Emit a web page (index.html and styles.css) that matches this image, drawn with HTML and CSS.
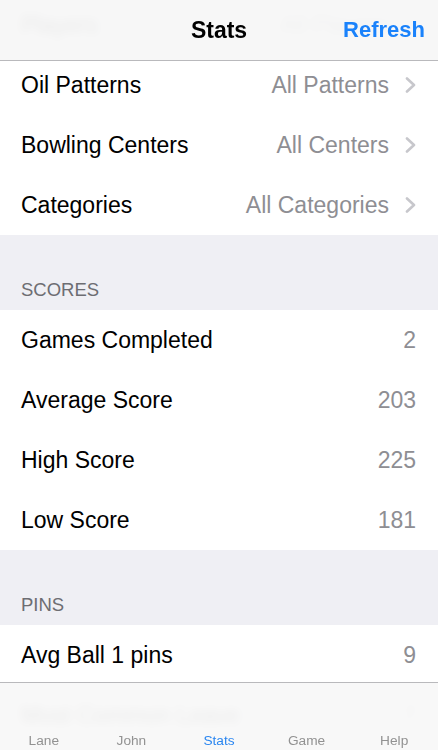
FILE: index.html
```html
<!DOCTYPE html>
<html>
<head>
<meta charset="utf-8">
<link rel="stylesheet" href="styles.css">
</head>
<body>
<div class="screen">
  <div class="content">
    <div class="group">
      <div class="row"><span class="label">Players</span><span class="value">All Players</span><svg class="chev" viewBox="0 0 12 16"><path d="M2 1.5 L9 8 L2 14.5"/></svg></div>
      <div class="row"><span class="label">Oil Patterns</span><span class="value">All Patterns</span><svg class="chev" viewBox="0 0 12 16"><path d="M2 1.5 L9 8 L2 14.5"/></svg></div>
      <div class="row"><span class="label">Bowling Centers</span><span class="value">All Centers</span><svg class="chev" viewBox="0 0 12 16"><path d="M2 1.5 L9 8 L2 14.5"/></svg></div>
      <div class="row"><span class="label">Categories</span><span class="value">All Categories</span><svg class="chev" viewBox="0 0 12 16"><path d="M2 1.5 L9 8 L2 14.5"/></svg></div>
    </div>
    <div class="section-header">SCORES</div>
    <div class="group">
      <div class="row"><span class="label">Games Completed</span><span class="value num">2</span></div>
      <div class="row"><span class="label">Average Score</span><span class="value num">203</span></div>
      <div class="row"><span class="label">High Score</span><span class="value num">225</span></div>
      <div class="row"><span class="label">Low Score</span><span class="value num">181</span></div>
    </div>
    <div class="section-header">PINS</div>
    <div class="group">
      <div class="row"><span class="label">Avg Ball 1 pins</span><span class="value num">9</span></div>
      <div class="row"><span class="label">Most Common Leave</span><span class="value num">7</span></div>
    </div>
  </div>
  <div class="navbar">
    <div class="nav-side"></div>
    <div class="nav-title">Stats</div>
    <div class="nav-side nav-right">Refresh</div>
  </div>
  <div class="tabbar">
    <div class="tab">Lane</div>
    <div class="tab">John</div>
    <div class="tab active">Stats</div>
    <div class="tab">Game</div>
    <div class="tab">Help</div>
  </div>
</div>
</body>
</html>
```
FILE: styles.css
```css
* { box-sizing: border-box; }
html, body { margin: 0; padding: 0; }
body {
  font-family: "Liberation Sans", Arial, sans-serif;
  background: #efeff4;
}
.screen {
  position: relative;
  width: 438px;
  height: 750px;
  overflow: hidden;
  background: #efeff4;
}
.content {
  display: flex;
  flex-direction: column;
  margin-top: -5px;
}
.group {
  background: #ffffff;
  display: flex;
  flex-direction: column;
}
.row {
  height: 60px;
  display: flex;
  align-items: center;
  padding: 0 21px;
  font-size: 23px;
  color: #000;
}
.label { flex: 1; }
.value {
  color: #8e8e93;
}
.chev {
  width: 12px;
  height: 16px;
  margin-left: 16px;
}
.chev path {
  fill: none;
  stroke: #c7c7cc;
  stroke-width: 2.6;
  stroke-linecap: round;
  stroke-linejoin: round;
}
.num { margin-right: 1px; }
.section-header {
  height: 75px;
  display: flex;
  align-items: flex-end;
  padding: 0 21px 10px;
  font-size: 18.5px;
  line-height: 20px;
  color: #6d6d72;
}
.navbar {
  position: absolute;
  top: 0;
  left: 0;
  right: 0;
  height: 61px;
  display: flex;
  align-items: center;
  padding: 0 13px 0 13px;
  background: rgba(247, 247, 247, 0.95);
  backdrop-filter: blur(5px);
  border-bottom: 1px solid #b9b9bc;
}
.nav-side { flex: 1; }
.nav-title {
  font-size: 23px;
  font-weight: bold;
  color: #000;
}
.nav-right {
  text-align: right;
  font-size: 22px;
  font-weight: bold;
  color: #1a82fb;
}
.tabbar {
  position: absolute;
  left: 0;
  right: 0;
  bottom: 0;
  height: 68px;
  display: grid;
  grid-template-columns: repeat(5, 1fr);
  align-items: end;
  padding-bottom: 1px;
  background: rgba(248, 248, 248, 0.95);
  backdrop-filter: blur(5px);
  border-top: 1px solid #b9b9bc;
}
.tab {
  text-align: center;
  font-size: 13.7px;
  line-height: 16px;
  color: #929292;
}
.tab.active { color: #2a86f0; }
```
